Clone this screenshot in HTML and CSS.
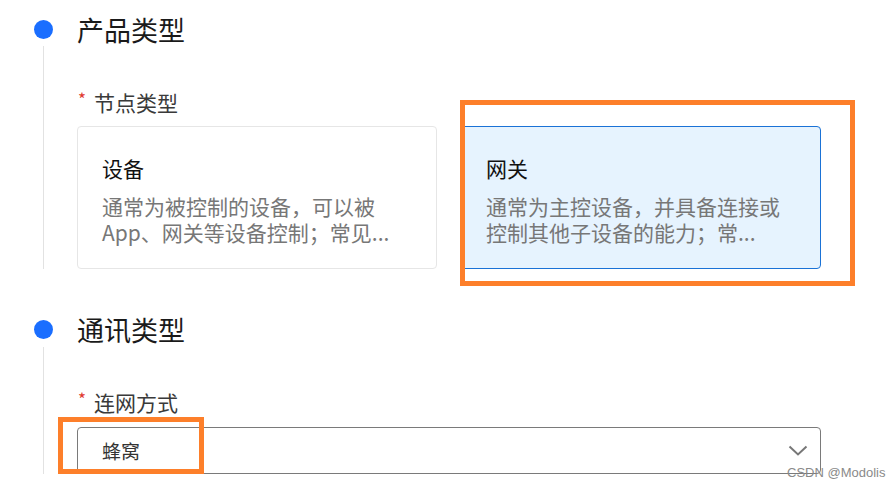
FILE: index.html
```html
<!DOCTYPE html>
<html lang="zh-CN">
<head>
<meta charset="utf-8">
<title>产品类型</title>
<link rel="stylesheet" href="styles.css">
</head>
<body>
<div class="page">
  <section class="step step-first">
    <div class="rail"><span class="dot"></span><span class="line"></span></div>
    <div class="body">
      <h2 class="step-title">产品类型</h2>
      <div class="field field-node">
        <div class="label"><span class="req">*</span>节点类型</div>
        <div class="options">
          <div class="option">
            <div class="option-title">设备</div>
            <div class="option-desc">通常为被控制的设备，可以被App、网关等设备控制；常见...</div>
          </div>
          <div class="option selected">
            <div class="option-title">网关</div>
            <div class="option-desc">通常为主控设备，并具备连接或控制其他子设备的能力；常...</div>
          </div>
        </div>
      </div>
    </div>
  </section>
  <section class="step step-second">
    <div class="rail"><span class="dot"></span><span class="line"></span></div>
    <div class="body">
      <h2 class="step-title">通讯类型</h2>
      <div class="field field-net">
        <div class="label"><span class="req">*</span>连网方式</div>
        <div class="select">
          <span class="select-value">蜂窝</span>
          <svg class="chevron" width="20" height="12" viewBox="0 0 20 12"><path d="M1.5 1.5 L10 9.5 L18.5 1.5" fill="none" stroke="#777" stroke-width="2"/></svg>
        </div>
      </div>
    </div>
  </section>
</div>
<div class="mark mark-gateway"></div>
<div class="mark mark-cell"></div>
<div class="watermark">CSDN @Modolis</div>
</body>
</html>
```

FILE: styles.css
```css
html, body {
  margin: 0;
  padding: 0;
  background: #fff;
}
body {
  font-family: "Noto Sans CJK SC", "Noto Sans", sans-serif;
  width: 895px;
  height: 488px;
  overflow: hidden;
  position: relative;
}
.page {
  padding-top: 15px;
  width: 821px;
}
.step {
  display: grid;
  grid-template-columns: 77px 744px;
}
.step-second {
  margin-top: 46px;
}
.rail {
  display: flex;
  flex-direction: column;
}
.dot {
  width: 19px;
  height: 19px;
  border-radius: 50%;
  background: #1a6eff;
  margin-left: 34px;
  margin-top: 5px;
}
.line {
  flex: 1;
  width: 1px;
  background: #e2e2e2;
  margin-left: 43px;
  margin-top: 7px;
}
.step-second .line {
  margin-top: 8px;
}
.step-title {
  margin: 0;
  font-size: 27px;
  line-height: 30px;
  font-weight: 400;
  color: #1a1a1a;
}
.field {
  margin-top: 45px;
}
.label {
  font-size: 21px;
  line-height: 24px;
  color: #3a3a3a;
  display: flex;
  align-items: flex-start;
}
.req {
  color: #e03a2f;
  font-size: 17px;
  line-height: 18px;
  width: 16px;
  margin-left: 1px;
}
.options {
  margin-top: 12px;
  display: grid;
  grid-template-columns: 360px 360px;
  gap: 24px;
}
.option {
  box-sizing: border-box;
  height: 143px;
  border: 1px solid #e6e6e6;
  border-radius: 4px;
  padding: 29px 24px 0 24px;
  background: #fff;
}
.option.selected {
  background: #e6f3fe;
  border-color: #1a72d6;
}
.option-title {
  font-size: 21px;
  line-height: 24px;
  color: #111;
}
.option-desc {
  margin-top: 13px;
  font-size: 21px;
  line-height: 26px;
  color: #777;
}
.field-net .label {
  margin-bottom: 13px;
}
.select {
  box-sizing: border-box;
  height: 47px;
  border: 1px solid #7a7a7a;
  border-radius: 4px;
  padding: 0 12px 0 24px;
  display: flex;
  align-items: center;
  justify-content: space-between;
}
.select-value {
  font-size: 19px;
  color: #333;
}
.chevron {
  display: block;
}
.mark {
  position: absolute;
  box-sizing: border-box;
  border: 5px solid #fd7f2a;
}
.mark-gateway {
  left: 460px;
  top: 100px;
  width: 395px;
  height: 186px;
}
.mark-cell {
  left: 58px;
  top: 417px;
  width: 146px;
  height: 57px;
}
.watermark {
  position: absolute;
  left: 787px;
  top: 465px;
  font-family: "Liberation Sans", Arial, sans-serif;
  font-size: 13px;
  line-height: 16px;
  color: #8a8a8a;
}
```
